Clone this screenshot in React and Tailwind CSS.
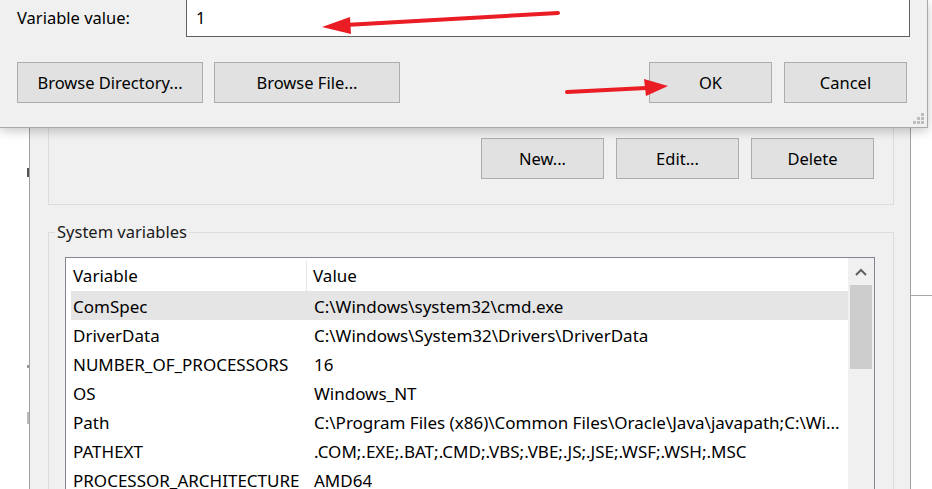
import React from 'react';

const rows = [
  { name: 'ComSpec', value: 'C:\\Windows\\system32\\cmd.exe', selected: true },
  { name: 'DriverData', value: 'C:\\Windows\\System32\\Drivers\\DriverData' },
  { name: 'NUMBER_OF_PROCESSORS', value: '16' },
  { name: 'OS', value: 'Windows_NT' },
  { name: 'Path', value: 'C:\\Program Files (x86)\\Common Files\\Oracle\\Java\\javapath;C:\\Wi...' },
  { name: 'PATHEXT', value: '.COM;.EXE;.BAT;.CMD;.VBS;.VBE;.JS;.JSE;.WSF;.WSH;.MSC' },
  { name: 'PROCESSOR_ARCHITECTURE', value: 'AMD64' },
];

const WinButton = ({ children, className = '' }) => (
  <button
    className={`h-[41px] pt-[2px] bg-[#e1e1e1] border border-[#adadad] flex items-center justify-center text-[#000] ${className}`}
  >
    {children}
  </button>
);

const Arrows = () => (
  <svg className="absolute inset-0 pointer-events-none" width="932" height="489" viewBox="0 0 932 489">
    {/* arrow pointing at the value box */}
    <line x1="558" y1="13" x2="345" y2="25" stroke="#ea1c24" strokeWidth="4" strokeLinecap="round" />
    <polygon points="322,27 350,17 351,34" fill="#ea1c24" />
    {/* arrow pointing at OK */}
    <line x1="567" y1="92" x2="646" y2="88" stroke="#ea1c24" strokeWidth="4" strokeLinecap="round" />
    <polygon points="668,86 644,79 646,96" fill="#ea1c24" />
  </svg>
);

const Gripper = () => (
  <svg className="absolute right-[2px] bottom-[2px]" width="12" height="12" viewBox="0 0 12 12">
    <rect x="8" y="0" width="3" height="3" fill="#bdbdbd" />
    <rect x="4" y="4" width="3" height="3" fill="#bdbdbd" />
    <rect x="8" y="4" width="3" height="3" fill="#bdbdbd" />
    <rect x="0" y="8" width="3" height="3" fill="#bdbdbd" />
    <rect x="4" y="8" width="3" height="3" fill="#bdbdbd" />
    <rect x="8" y="8" width="3" height="3" fill="#bdbdbd" />
  </svg>
);

export default function App() {
  return (
    <div className="relative w-[932px] h-[489px] overflow-hidden bg-white font-['Noto_Sans',sans-serif] text-[16.5px] text-black flex">
      {/* left strip of desktop */}
      <div className="w-[29px] h-full flex flex-col items-end">
        <div className="mt-[168px] w-[2px] h-[9px] bg-[#555]" />
        <div className="mt-[188px] w-[2px] h-[3px] bg-[#999]" />
        <div className="mt-[44px] w-[2px] h-[12px] bg-[#bbb]" />
      </div>

      {/* background window: Environment Variables */}
      <div className="w-[882px] h-full bg-[#f0f0f0] border-x border-[#a0a0a0] pt-[100px] pl-[18px]">
        <div className="w-[846px] h-[105px] border border-[#dcdcdc] flex justify-end items-start pt-[37px] pr-[19px] gap-[12px]">
          <WinButton className="w-[123px]">New...</WinButton>
          <WinButton className="w-[123px]">Edit...</WinButton>
          <WinButton className="w-[123px]">Delete</WinButton>
        </div>

        <fieldset className="mt-[15px] w-[846px] h-[300px] border border-[#dcdcdc] pl-0">
          <legend className="ml-[6px] px-[2px] leading-[24px] text-[#1a1a1a]">System variables</legend>
          <div className="ml-[16px] mt-[13px] w-[810px] h-[260px] border border-[#828790] bg-white flex text-[17px]">
            <div className="flex-1 flex flex-col">
              <div className="h-[33px] pt-[3px] flex items-center shrink-0">
                <div className="w-[241px] h-full pl-[7px] flex items-center border-r border-[#e5e5e5]">Variable</div>
                <div className="pl-[6px]">Value</div>
              </div>
              {rows.map((r) => (
                <div
                  key={r.name}
                  className={`ml-[5px] h-[29px] pt-[3px] shrink-0 flex items-center ${r.selected ? 'bg-[#e5e5e5]' : ''}`}
                >
                  <div className="w-[236px] pl-[2px] whitespace-nowrap">{r.name}</div>
                  <div className="pl-[7px] whitespace-nowrap overflow-hidden">{r.value}</div>
                </div>
              ))}
            </div>
            <div className="w-[26px] bg-[#f0f0f0] flex flex-col items-center shrink-0">
              <div className="h-[27px] flex items-center justify-center">
                <svg width="12" height="8" viewBox="0 0 12 8">
                  <path d="M1 7 L6 2 L11 7" fill="none" stroke="#606060" strokeWidth="2" />
                </svg>
              </div>
              <div className="w-[22px] h-[84px] bg-[#cdcdcd]" />
            </div>
          </div>
        </fieldset>
      </div>

      {/* right strip */}
      <div className="flex-1 h-full pt-[295px]">
        <div className="h-[1px] bg-[#a9a9a9]" />
      </div>

      {/* foreground dialog: Edit System Variable */}
      <div className="absolute top-0 left-0 w-[928px] h-[128px] bg-[#f0f0f0] border-r border-b border-[#a8a8a8] shadow-[0_3px_10px_rgba(0,0,0,0.22)]">
        <div className="flex items-start">
          <div className="w-[186px] pl-[17px] h-[37px] flex items-center">Variable value:</div>
          <div className="w-[724px] h-[37px] bg-white border-x border-b border-[#5f5f5f] flex items-center pl-[9px]">1</div>
        </div>
        <div className="mt-[25px] flex justify-between pl-[17px] pr-[20px]">
          <div className="flex gap-[11px]">
            <WinButton className="w-[186px]">Browse Directory...</WinButton>
            <WinButton className="w-[186px]">Browse File...</WinButton>
          </div>
          <div className="flex gap-[12px]">
            <WinButton className="w-[123px]">OK</WinButton>
            <WinButton className="w-[123px]">Cancel</WinButton>
          </div>
        </div>
        <Gripper />
      </div>

      <Arrows />
    </div>
  );
}
